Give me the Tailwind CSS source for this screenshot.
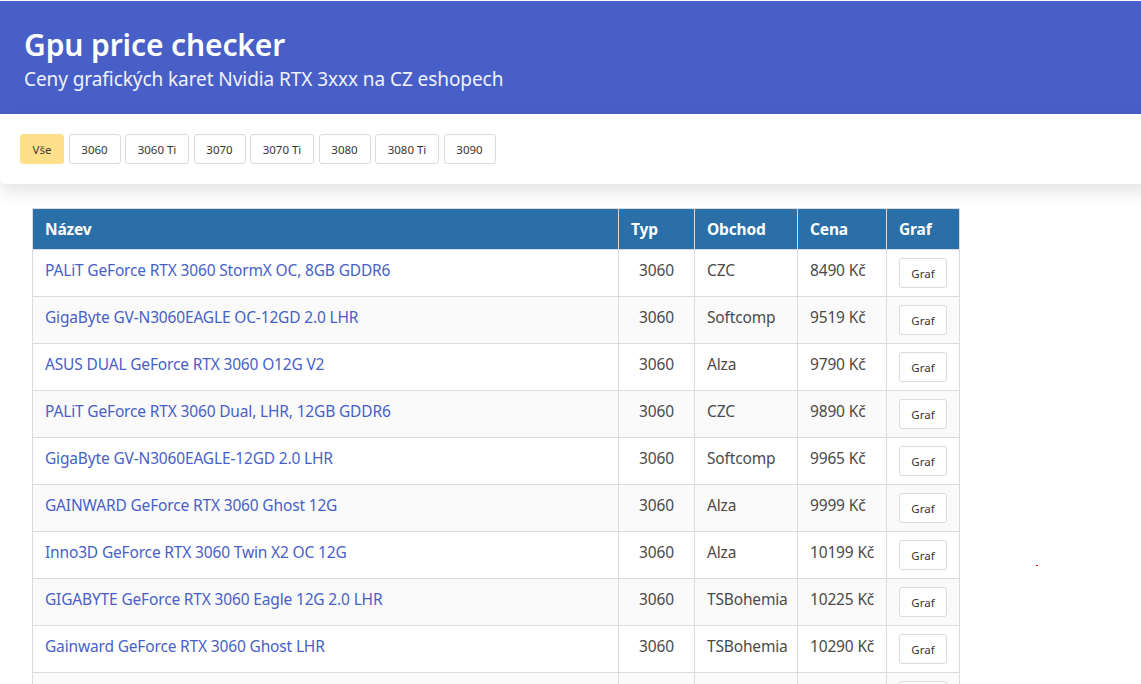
<!DOCTYPE html>
<html lang="en">
<head>
  <meta charset="UTF-8">
  <title>Gpu price checker</title>
  <script src="https://cdn.jsdelivr.net/npm/@tailwindcss/browser@4"></script>
</head>
<body class="relative h-screen overflow-hidden bg-white font-['Noto_Sans',sans-serif] text-[15.5px] tracking-[-0.16px] text-[#4a4a4a]">
  <!-- Header -->
  <header class="mt-px h-[113px] bg-[#485fc7] px-6 pt-[26px]">
    <h1 class="text-[30px] leading-[36px] font-semibold tracking-[-0.12px] text-white">Gpu price checker</h1>
    <p class="mt-px text-[19px] leading-[30px] tracking-[-0.07px] text-[#f0f2fb]">Ceny grafických karet Nvidia RTX 3xxx na CZ eshopech</p>
  </header>

  <!-- Filter -->
  <nav class="flex h-[70px] w-[1160px] items-start gap-[4.5px] rounded-md bg-white px-5 pt-5 text-[11.5px] tracking-normal shadow-[0_8px_16px_rgba(10,10,10,0.1)]">
    <button class="h-[30px] w-11 rounded-[3px] border border-[#ffe08a] bg-[#ffe08a] pt-px text-[#3b3b3b]">Vše</button>
    <button class="h-[30px] w-[52px] rounded-[3px] border border-[#dbdbdb] pt-px text-[#363636]">3060</button>
    <button class="h-[30px] w-16 rounded-[3px] border border-[#dbdbdb] pt-px text-[#363636]">3060 Ti</button>
    <button class="h-[30px] w-[52px] rounded-[3px] border border-[#dbdbdb] pt-px text-[#363636]">3070</button>
    <button class="h-[30px] w-16 rounded-[3px] border border-[#dbdbdb] pt-px text-[#363636]">3070 Ti</button>
    <button class="h-[30px] w-[52px] rounded-[3px] border border-[#dbdbdb] pt-px text-[#363636]">3080</button>
    <button class="h-[30px] w-16 rounded-[3px] border border-[#dbdbdb] pt-px text-[#363636]">3080 Ti</button>
    <button class="h-[30px] w-[52px] rounded-[3px] border border-[#dbdbdb] pt-px text-[#363636]">3090</button>
  </nav>

  <!-- Table -->
  <main class="pl-8 pt-6">
    <table class="w-[927px] table-fixed border-collapse">
      <colgroup>
        <col class="w-[586px]">
        <col class="w-[76px]">
        <col class="w-[103px]">
        <col class="w-[89px]">
        <col class="w-[73px]">
      </colgroup>
      <thead>
        <tr class="h-[41px] bg-[#2a6fa8] text-left font-bold text-white">
          <th class="border border-[#dbdbdb] px-3 pt-0.5">Název</th>
          <th class="border border-[#dbdbdb] px-3 pt-0.5">Typ</th>
          <th class="border border-[#dbdbdb] px-3 pt-0.5">Obchod</th>
          <th class="border border-[#dbdbdb] px-3 pt-0.5">Cena</th>
          <th class="border border-[#dbdbdb] px-3 pt-0.5">Graf</th>
        </tr>
      </thead>
      <tbody id="rows"></tbody>
    </table>
  </main>

  <!-- stray pixel in the screenshot -->
  <span class="absolute left-[1036px] top-[565px] h-px w-0.5 bg-[#ff0000]"></span>

  <script>
    const gpus = [
      ['PALiT GeForce RTX 3060 StormX OC, 8GB GDDR6', 'CZC', '8490 Kč'],
      ['GigaByte GV-N3060EAGLE OC-12GD 2.0 LHR', 'Softcomp', '9519 Kč'],
      ['ASUS DUAL GeForce RTX 3060 O12G V2', 'Alza', '9790 Kč'],
      ['PALiT GeForce RTX 3060 Dual, LHR, 12GB GDDR6', 'CZC', '9890 Kč'],
      ['GigaByte GV-N3060EAGLE-12GD 2.0 LHR', 'Softcomp', '9965 Kč'],
      ['GAINWARD GeForce RTX 3060 Ghost 12G', 'Alza', '9999 Kč'],
      ['Inno3D GeForce RTX 3060 Twin X2 OC 12G', 'Alza', '10199 Kč'],
      ['GIGABYTE GeForce RTX 3060 Eagle 12G 2.0 LHR', 'TSBohemia', '10225 Kč'],
      ['Gainward GeForce RTX 3060 Ghost LHR', 'TSBohemia', '10290 Kč'],
      ['', '', '']
    ];

    document.getElementById('rows').innerHTML = gpus.map(([name, shop, price]) => `
      <tr class="h-[47px] even:bg-[#fafafa]">
        <td class="border border-[#dbdbdb] px-3 pb-[5px] text-[#485fc7]"><a href="#">${name}</a></td>
        <td class="border border-[#dbdbdb] px-3 pb-[5px] text-center">${name ? '3060' : ''}</td>
        <td class="border border-[#dbdbdb] px-3 pb-[5px]">${shop}</td>
        <td class="border border-[#dbdbdb] px-3 pb-[5px] whitespace-nowrap">${price}</td>
        <td class="border border-[#dbdbdb] px-3"><button class="block h-[30px] w-12 rounded-[3px] border border-[#dbdbdb] bg-white pt-px text-[11.5px] tracking-normal text-[#363636]">Graf</button></td>
      </tr>`).join('');
  </script>
</body>
</html>
